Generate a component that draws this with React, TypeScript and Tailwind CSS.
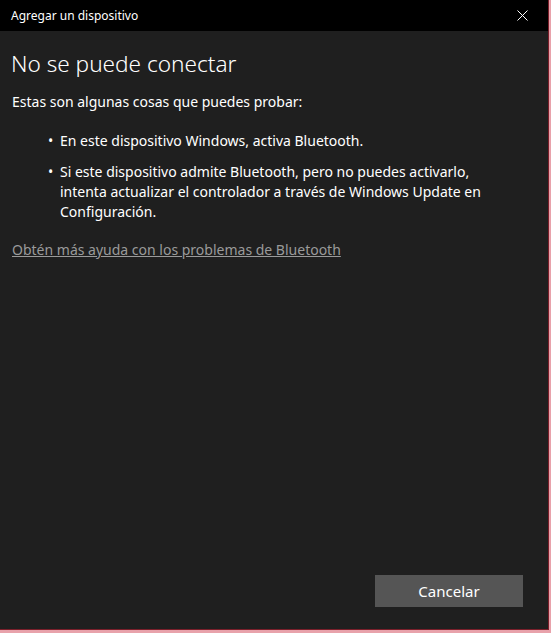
import React from "react";

export default function App() {
  const font = { fontFamily: '"Segoe UI", "Noto Sans", sans-serif' };
  return (
    <div className="w-[551px] h-[633px] bg-[#e8a2ab] flex flex-col" style={font}>
      <div className="w-[549px] h-[630px] bg-[#7a1f2a] flex flex-col">
        <div className="w-[548px] h-[629px] bg-[#1f1f1f] flex flex-col">
          <div className="h-[31px] bg-black flex items-center justify-between pl-[11px] pr-[20px]">
            <span className="text-[12px] text-white">Agregar un dispositivo</span>
            <svg width="11" height="11" viewBox="0 0 11 11" className="text-white">
              <path d="M0.5 0.5 L10.5 10.5 M10.5 0.5 L0.5 10.5" stroke="currentColor" strokeWidth="1" />
            </svg>
          </div>
          <div className="flex-1 flex flex-col px-[11px]">
            <h1 className="text-[22.6px] font-light text-white mt-[17px] leading-[32px]">No se puede conectar</h1>
            <p className="text-[14px] text-white mt-[12px] leading-[20px] pl-[1px]">Estas son algunas cosas que puedes probar:</p>
            <ul className="mt-[19px] pl-[37px] text-[14px] text-white leading-[20px] flex flex-col gap-[11px]">
              <li className="flex">
                <span className="w-[12px] shrink-0">•</span>
                <span>En este dispositivo Windows, activa Bluetooth.</span>
              </li>
              <li className="flex">
                <span className="w-[12px] shrink-0">•</span>
                <span className="w-[440px]">Si este dispositivo admite Bluetooth, pero no puedes activarlo, intenta actualizar el controlador a través de Windows Update en Configuración.</span>
              </li>
            </ul>
            <a className="mt-[18px] pl-[1px] text-[14px] text-[#9a9a9a] underline leading-[20px] self-start">Obtén más ayuda con los problemas de Bluetooth</a>
            <div className="flex-1" />
            <div className="flex justify-end pr-[14px] pb-[22px]">
              <button className="w-[148px] h-[32px] bg-[#555555] text-white text-[15px]">Cancelar</button>
            </div>
          </div>
        </div>
      </div>
    </div>
  );
}
